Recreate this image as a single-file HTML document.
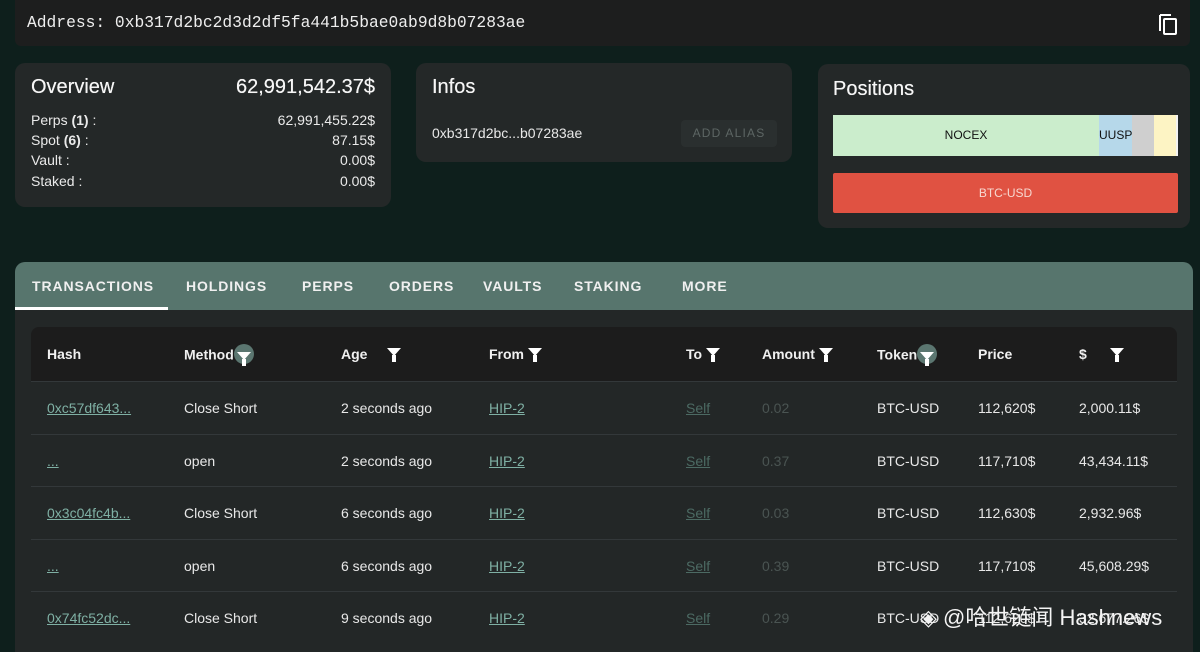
<!DOCTYPE html>
<html><head><meta charset="utf-8"><style>
*{margin:0;padding:0;box-sizing:border-box}
body{width:1200px;height:639px;overflow:hidden;background:#0e1f1c;font-family:"Liberation Sans",sans-serif;color:#e8e8e8;position:relative}
.abs{position:absolute}
.addr{left:15px;top:0;width:1175px;height:46px;background:#1d1e1e;border-radius:0 0 6px 6px}
.addr span{position:absolute;left:12px;top:13px;font-family:"Liberation Mono",monospace;font-size:16.3px;color:#eee}
.card{background:#242828;border-radius:10px}
.ov{left:15px;top:63px;width:376px;height:144px}
.ov h2,.inf h2,.pos h2{position:absolute;font-size:20px;font-weight:normal;color:#f6f6f6;text-shadow:0 0 0.4px #fff}
.row{position:absolute;left:16px;right:16px;font-size:14px;display:flex;justify-content:space-between;color:#eaeaea}
.inf{left:416px;top:63px;width:376px;height:99px}
.pos{left:818px;top:64px;width:372px;height:164px}
.tabs{left:15px;top:262px;width:1178px;height:390px;background:#232727;border-radius:10px 10px 0 0;overflow:hidden}
.tb{position:absolute;left:0;top:0;width:100%;height:48px;background:#57756d}
.tb span{position:absolute;top:16px;font-size:14px;letter-spacing:0.9px;color:#f0f0f0;font-weight:bold}
.tbl{left:31px;top:327px;width:1146px;height:320px;background:#232727;border-radius:8px 8px 0 0;overflow:hidden}
.hd{position:absolute;left:0;top:0;width:100%;height:54px;background:#1c1c1c}
.c{position:absolute;font-size:14px;white-space:nowrap}
.hd .c{top:19px;font-weight:bold;color:#f0f0f0}
.tr{position:absolute;left:0;width:100%;height:52px;border-top:1px solid #33383a}
.tr .c{top:18px;color:#e8e8e8}
.lk{color:#7fb0a4!important;text-decoration:underline}
.sf{color:#4c6a63!important;text-decoration:underline}
.am{color:#4a5452!important}
.f{display:inline-block;width:0;height:0;border-left:7px solid transparent;border-right:7px solid transparent;border-top:8px solid #fff;vertical-align:middle;position:relative;top:-3px}
.f:after{content:"";position:absolute;left:-2px;top:-1px;width:4px;height:7px;background:#fff}
.fc{display:inline-block;width:20px;height:20px;border-radius:50%;background:#5b7670;vertical-align:middle;position:relative;top:-2px;text-align:center;padding-top:6px}
</style></head><body>
<div class="abs addr"><span>Address: 0xb317d2bc2d3d2df5fa441b5bae0ab9d8b07283ae</span>
<svg class="abs" style="left:1142px;top:12px" width="22" height="24" viewBox="0 0 22 24"><path d="M3 3v16" stroke="#fff" stroke-width="2" fill="none"/><path d="M3 3h11" stroke="#fff" stroke-width="2"/><rect x="7" y="7" width="12" height="15" rx="1" stroke="#fff" stroke-width="2" fill="none"/></svg></div>

<div class="abs card ov">
<h2 style="left:16px;top:13px">Overview</h2>
<div class="abs" style="right:16px;top:13px;font-size:20px;color:#f6f6f6;text-shadow:0 0 0.4px #fff">62,991,542.37$</div>
<div class="row" style="top:49px"><span>Perps <b>(1)</b> :</span><span>62,991,455.22$</span></div>
<div class="row" style="top:69px"><span>Spot <b>(6)</b> :</span><span>87.15$</span></div>
<div class="row" style="top:89px"><span>Vault :</span><span>0.00$</span></div>
<div class="row" style="top:110px"><span>Staked :</span><span>0.00$</span></div>
</div>
<div class="abs card inf">
<h2 style="left:16px;top:13px">Infos</h2>
<div class="abs" style="left:16px;top:62px;font-size:14px">0xb317d2bc...b07283ae</div>
<div class="abs" style="left:265px;top:57px;width:96px;height:27px;background:#2a2f2f;border-radius:4px;font-size:12px;letter-spacing:1.2px;color:#5d6664;text-align:center;line-height:27px">ADD ALIAS</div>
</div>
<div class="abs card pos">
<h2 style="left:15px;top:14px">Positions</h2>
<div class="abs" style="left:15px;top:51px;width:345px;height:41px;background:#f3f3f3">
<div class="abs" style="left:0;top:0;width:266px;height:41px;background:#cbedcc;color:#111;font-size:12px;text-align:center;line-height:41px">NOCEX</div>
<div class="abs" style="left:266px;top:0;width:33px;height:41px;background:#b6d8ea;color:#111;font-size:12px;line-height:41px">UUSP</div>
<div class="abs" style="left:299px;top:0;width:22px;height:41px;background:#cfcfcf"></div>
<div class="abs" style="left:321px;top:0;width:22px;height:41px;background:#fdf4c4"></div>
</div>
<div class="abs" style="left:15px;top:109px;width:345px;height:40px;background:#e05242;border-radius:2px;color:#f7d8d0;font-size:12px;text-align:center;line-height:40px">BTC-USD</div>
</div>

<div class="abs tabs"><div class="tb">
<span style="left:17px">TRANSACTIONS</span><span style="left:171px">HOLDINGS</span><span style="left:287px">PERPS</span><span style="left:374px">ORDERS</span><span style="left:468px">VAULTS</span><span style="left:559px">STAKING</span><span style="left:667px">MORE</span>
<div class="abs" style="left:0;top:45px;width:153px;height:3px;background:#fff"></div></div></div>

<div class="abs tbl">
<div class="hd">
<span class="c" style="left:16px">Hash</span>
<span class="c" style="left:153px">Method<span class="fc"><i class="f"></i></span></span>
<span class="c" style="left:310px">Age &nbsp;&nbsp;&nbsp;&nbsp;<i class="f"></i></span>
<span class="c" style="left:458px">From <i class="f"></i></span>
<span class="c" style="left:655px">To <i class="f"></i></span>
<span class="c" style="left:731px">Amount <i class="f"></i></span>
<span class="c" style="left:846px">Token<span class="fc"><i class="f"></i></span></span>
<span class="c" style="left:947px">Price</span>
<span class="c" style="left:1048px">$ &nbsp;&nbsp;&nbsp;&nbsp;&nbsp;<i class="f"></i></span>
</div>
<div class="tr" style="top:54px"><span class="c lk" style="left:16px">0xc57df643...</span><span class="c" style="left:153px">Close Short</span><span class="c" style="left:310px">2 seconds ago</span><span class="c lk" style="left:458px">HIP-2</span><span class="c sf" style="left:655px">Self</span><span class="c am" style="left:731px">0.02</span><span class="c" style="left:846px">BTC-USD</span><span class="c" style="left:947px">112,620$</span><span class="c" style="left:1048px">2,000.11$</span></div>
<div class="tr" style="top:107px"><span class="c lk" style="left:16px">...</span><span class="c" style="left:153px">open</span><span class="c" style="left:310px">2 seconds ago</span><span class="c lk" style="left:458px">HIP-2</span><span class="c sf" style="left:655px">Self</span><span class="c am" style="left:731px">0.37</span><span class="c" style="left:846px">BTC-USD</span><span class="c" style="left:947px">117,710$</span><span class="c" style="left:1048px">43,434.11$</span></div>
<div class="tr" style="top:159px"><span class="c lk" style="left:16px">0x3c04fc4b...</span><span class="c" style="left:153px">Close Short</span><span class="c" style="left:310px">6 seconds ago</span><span class="c lk" style="left:458px">HIP-2</span><span class="c sf" style="left:655px">Self</span><span class="c am" style="left:731px">0.03</span><span class="c" style="left:846px">BTC-USD</span><span class="c" style="left:947px">112,630$</span><span class="c" style="left:1048px">2,932.96$</span></div>
<div class="tr" style="top:212px"><span class="c lk" style="left:16px">...</span><span class="c" style="left:153px">open</span><span class="c" style="left:310px">6 seconds ago</span><span class="c lk" style="left:458px">HIP-2</span><span class="c sf" style="left:655px">Self</span><span class="c am" style="left:731px">0.39</span><span class="c" style="left:846px">BTC-USD</span><span class="c" style="left:947px">117,710$</span><span class="c" style="left:1048px">45,608.29$</span></div>
<div class="tr" style="top:264px"><span class="c lk" style="left:16px">0x74fc52dc...</span><span class="c" style="left:153px">Close Short</span><span class="c" style="left:310px">9 seconds ago</span><span class="c lk" style="left:458px">HIP-2</span><span class="c sf" style="left:655px">Self</span><span class="c am" style="left:731px">0.29</span><span class="c" style="left:846px">BTC-USD</span><span class="c" style="left:947px">112,620$</span><span class="c" style="left:1048px">32,677.26$</span></div>
</div>
<div class="abs" style="left:920px;top:600px;font-size:22px;color:#f4f4f4;font-family:'Liberation Sans','Noto Sans CJK SC',sans-serif;white-space:nowrap">◈ @哈世链闻 Hashnews</div>
</body></html>
